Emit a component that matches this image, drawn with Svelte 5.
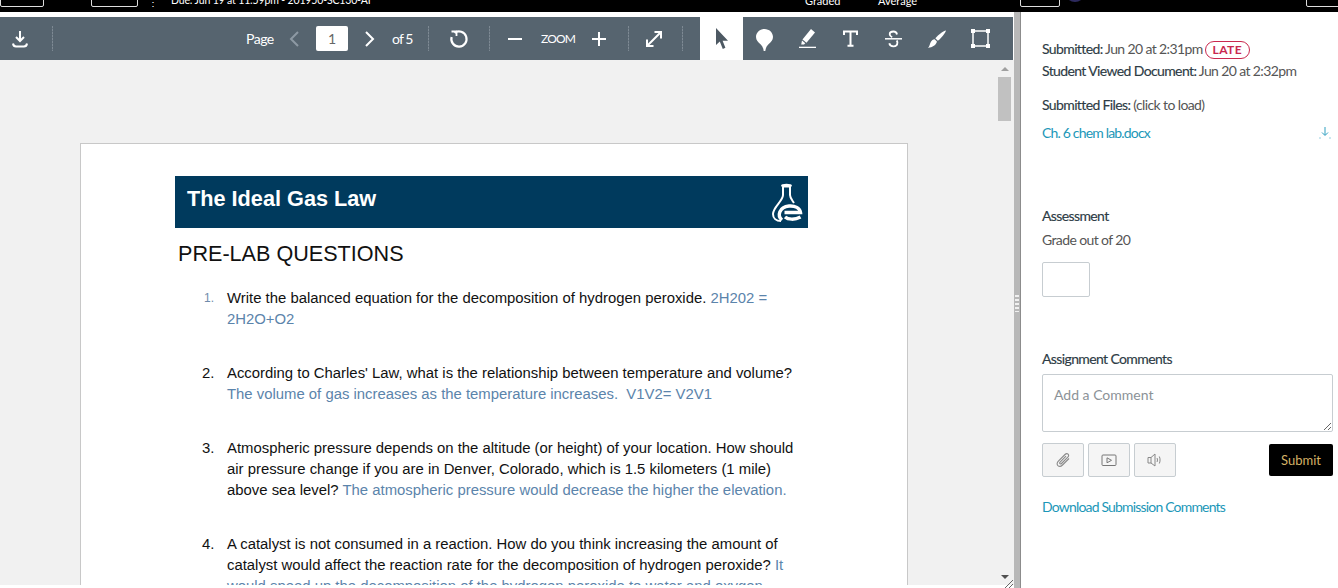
<script>
  const questions = [
    {
      n: '1.',
      text: 'Write the balanced equation for the decomposition of hydrogen peroxide.',
      answer: '2H202 = 2H2O+O2',
      small: true
    },
    {
      n: '2.',
      text: "According to Charles' Law, what is the relationship between temperature and volume?",
      answer: 'The volume of gas increases as the temperature increases.\u00a0 V1V2= V2V1'
    },
    {
      n: '3.',
      text: 'Atmospheric pressure depends on the altitude (or height) of your location. How should air pressure change if you are in Denver, Colorado, which is 1.5 kilometers (1 mile) above sea level?',
      answer: 'The atmospheric pressure would decrease the higher the elevation.'
    },
    {
      n: '4.',
      text: 'A catalyst is not consumed in a reaction. How do you think increasing the amount of catalyst would affect the reaction rate for the decomposition of hydrogen peroxide?',
      answer: 'It would speed up the decomposition of the hydrogen peroxide to water and oxygen.'
    }
  ];
</script>

<div class="app">
  <header class="topbar">
    <span class="top-btn first"></span>
    <span class="top-btn second"></span>
    <span class="top-dots">⋮</span>
    <span class="top-text due">Due: Jun 19 at 11:59pm - 201950-SC130-AI</span>
    <span class="top-text graded">Graded</span>
    <span class="top-text average">Average</span>
    <span class="top-btn third"></span>
    <span class="avatar"></span>
    <span class="top-btn fourth"></span>
  </header>

  <div class="body">
    <main class="viewer">
      <div class="toolbar">
        <button class="tool download" aria-label="Download">
          <svg width="18" height="18" viewBox="0 0 18 18" fill="none" stroke="#fff" stroke-width="2"><path d="M9 1v9.500M5 7l4 4 4-4"/><path d="M2 13.500c.3 2 1.200 3 3 3h8c1.800 0 2.700-1 3-3"/></svg>
        </button>
        <span class="sep sep-a"></span>
        <span class="label page-label">Page</span>
        <button class="tool chev prev" aria-label="Previous page">
          <svg width="12" height="16" viewBox="0 0 12 16" fill="none" stroke="#8d99a3" stroke-width="2"><path d="M10 1 3 8l7 7"/></svg>
        </button>
        <input class="page-input" value="1" aria-label="Page number" />
        <button class="tool chev next" aria-label="Next page">
          <svg width="12" height="16" viewBox="0 0 12 16" fill="none" stroke="#fff" stroke-width="2"><path d="m3 1 7 7-7 7"/></svg>
        </button>
        <span class="label of">of 5</span>
        <span class="sep sep-b"></span>
        <button class="tool rotate" aria-label="Rotate">
          <svg width="20" height="20" viewBox="0 0 20 20" fill="none" stroke="#fff" stroke-width="2.200"><path d="M5.500 3.800A7.600 7.600 0 1 1 2.600 8"/><path d="M2.500 2.500h5v4.500" stroke-width="1.800"/></svg>
        </button>
        <span class="sep sep-c"></span>
        <button class="tool minus" aria-label="Zoom out">
          <svg width="14" height="14" viewBox="0 0 14 14" stroke="#fff" stroke-width="2"><path d="M0 7h14"/></svg>
        </button>
        <span class="label zoom">ZOOM</span>
        <button class="tool plus" aria-label="Zoom in">
          <svg width="14" height="14" viewBox="0 0 14 14" stroke="#fff" stroke-width="2"><path d="M0 7h14M7 0v14"/></svg>
        </button>
        <span class="sep sep-d"></span>
        <button class="tool expand" aria-label="Fullscreen">
          <svg width="18" height="18" viewBox="0 0 18 18" fill="none" stroke="#fff" stroke-width="2"><path d="M3 15 15 3M9.500 2h6.500v6.500M2 9.500V16h6.500"/></svg>
        </button>
        <span class="sep sep-e"></span>
        <button class="tool annot selected" aria-label="Select">
          <svg width="14" height="21" viewBox="0 0 14 21" fill="#4d5963"><path d="M1 0v17l3.800-3.600L7.800 21l2.600-1.200-2.800-7H13z"/></svg>
        </button>
        <button class="tool annot pin" aria-label="Point">
          <svg width="17" height="22" viewBox="0 0 17 22" fill="#fff"><path d="M8.500 0C13.200 0 17 3.600 17 8c0 3.200-2.200 5.200-4.500 7.300C11 16.800 9.800 18.500 9.300 22H7.700C7.200 18.500 6 16.800 4.500 15.300 2.200 13.200 0 11.200 0 8 0 3.600 3.800 0 8.500 0z"/></svg>
        </button>
        <button class="tool annot" aria-label="Highlight">
          <svg width="17" height="19" viewBox="0 0 17 19" fill="#fff"><path d="M12 0l4 3.500-8.500 10.300-4-3.300z"/><path d="M3 11.500l3.300 2.800-1.300 1.200H2.200z"/><path d="M0 17.700h17v1.300H0z"/></svg>
        </button>
        <button class="tool annot" aria-label="Text">
          <svg width="15" height="17" viewBox="0 0 15 17" fill="none" stroke="#fff" stroke-width="2"><path d="M1 5V1.500h13V5M7.500 1.500V15.500M4.500 15.800h6" /></svg>
        </button>
        <button class="tool annot" aria-label="Strikethrough">
          <svg width="17" height="18" viewBox="0 0 17 18" fill="none" stroke="#fff" stroke-width="1.800"><path d="M12 4.500c-.3-2-1.800-3-3.600-3-2.200 0-3.700 1.200-3.700 2.800 0 1.500 1 2.300 2.500 3M11.600 10.500c.5.500.8 1.200.8 2 0 2.200-1.700 3.800-4 3.800-2.200 0-3.700-1.100-4.100-3"/><path d="M0 8.800h17" stroke-width="1.500"/></svg>
        </button>
        <button class="tool annot" aria-label="Draw">
          <svg width="18" height="18" viewBox="0 0 18 18" fill="#fff"><path d="M17.800.5c.6.700-4 7.300-8 10.300L7.300 8.300C10.500 4.300 17.100-.2 17.800.5z"/><path d="M6.600 9.300l2.300 2.300C8.400 15 4.500 17.500 0 18c1.500-1.500 1.800-4 2.800-6 .8-1.500 2.300-2.600 3.800-2.700z"/></svg>
        </button>
        <button class="tool annot area" aria-label="Area">
          <svg width="19" height="19" viewBox="0 0 19 19" fill="#fff"><path d="M2 2h15v15H2z" fill="none" stroke="#fff" stroke-width="1.500"/><path d="M0 0h4v4H0zM15 0h4v4h-4zM0 15h4v4H0zM15 15h4v4h-4z"/></svg>
        </button>
      </div>

      <div class="doc">
        <article class="page">
          <div class="banner">
            <h1>The Ideal Gas Law</h1>
            <svg class="flask" width="32" height="40" viewBox="0 0 32 40" fill="none" stroke="#fff" stroke-width="2">
              <path d="M11 2.500c0-1.300 9-1.300 9 0 0 1.500-9 1.500-9 0z" stroke-width="1.800"/>
              <path d="M12 4v8C12 18 2 24 2 31c0 4 3 7 8 7"/>
              <path d="M19 4v8c0 3 2 5 4 8"/>
              <path d="M11 37C6 33 8 24 18 23c6-.5 11 2 11.500 6.500H13.500" stroke-width="3.400"/>
              <path d="M14 34c3 2.800 10 3 15.500 0" stroke-width="3.400"/>
            </svg>
          </div>
          <h2>PRE-LAB QUESTIONS</h2>
          <ol class="questions">
            {#each questions as q}
              <li>
                <span class="num" class:small={q.small}>{q.n}</span>
                <p>{q.text} <span class="answer">{q.answer}</span></p>
              </li>
            {/each}
          </ol>
        </article>

        <div class="scrollbar">
          <span class="arrow up"></span>
          <span class="thumb"></span>
          <span class="arrow down"></span>
        </div>
      </div>
      <svg class="resize" width="10" height="10" viewBox="0 0 10 10" stroke="#666" fill="none"><path d="M2 10l8-8M6 10l4-4"/></svg>
    </main>

    <div class="splitter"><span class="grip"></span></div>

    <aside class="side">
      <p class="meta first-meta">
        <b>Submitted:</b> Jun 20 at 2:31pm<span class="late">LATE</span>
      </p>
      <p class="meta"><b>Student Viewed Document:</b> Jun 20 at 2:32pm</p>
      <p class="meta files"><b>Submitted Files:</b> (click to load)</p>
      <div class="file">
        <a href="#file">Ch. 6 chem lab.docx</a>
        <svg width="12" height="12" viewBox="0 0 12 12" fill="none" stroke="#2e9fc0" stroke-width="1"><path d="M6 0v8M3 5.500 6 8.500l3-3"/><path d="M.5 11h1M10.500 11h1"/></svg>
      </div>

      <h3 class="assessment">Assessment</h3>
      <p class="meta grade">Grade out of 20</p>
      <input class="grade-input" aria-label="Grade" />

      <h3 class="comments">Assignment Comments</h3>
      <div class="comment-box">
        <textarea placeholder="Add a Comment"></textarea>
      </div>
      <div class="actions">
        <button class="media" aria-label="Attach">
          <svg width="16" height="16" viewBox="0 0 16 16" fill="none" stroke="#8a8a8a" stroke-width="1.100"><path d="M14 6.500 7.500 13c-1.500 1.500-3.400 1.700-4.600.6-1.200-1.200-1-3 .5-4.500L10 2.500c1-1 2.300-1.100 3.100-.3.800.8.700 2-.3 3L6.500 11.500c-.5.500-1.200.6-1.600.2-.4-.4-.3-1 .2-1.600L11 4.200"/></svg>
        </button>
        <button class="media" aria-label="Record video">
          <svg width="16" height="14" viewBox="0 0 16 14" fill="none" stroke="#777" stroke-width="1"><rect x="1" y="2" width="14" height="10.500" rx="1"/><path d="M6 4.800v5l4.500-2.500z"/></svg>
        </button>
        <button class="media" aria-label="Record audio">
          <svg width="16" height="14" viewBox="0 0 16 14" fill="none" stroke="#888" stroke-width="1"><path d="M1 4.500h3V10H1zM4 4.500 8 1v12l-4-3"/><path d="M10 5c.6 1.200.6 2.800 0 4M12.300 3.500c1 2 1 5 0 7"/></svg>
        </button>
        <button class="submit">Submit</button>
      </div>
      <a class="download-comments" href="#comments">Download Submission Comments</a>
    </aside>
  </div>
</div>

<style>
  :global(body) {
    margin: 0;
    background: #fff;
    overflow: hidden;
  }

  .app {
    width: 1338px;
    height: 588px;
    overflow: hidden;
    font-family: Lato, "Liberation Sans", sans-serif;
  }

  .topbar {
    display: flex;
    align-items: flex-end;
    height: 12px;
    padding-bottom: 5px;
    box-sizing: border-box;
    background: #000;
    overflow: hidden;
    color: #fff;
  }

  .top-btn {
    flex: none;
    height: 20px;
    box-sizing: border-box;
    border: 1px solid #ddd;
    border-radius: 2px;
  }

  .top-btn.first { width: 44px; }
  .top-btn.second { width: 47px; margin-left: 47px; }
  .top-btn.third { width: 40px; margin-left: 102px; }
  .top-btn.fourth { width: 40px; margin-left: 221px; }

  .top-dots {
    flex: none;
    width: 8px;
    margin-left: 10px;
    font-size: 10px;
    line-height: 10px;
  }

  .top-text {
    flex: none;
    font-size: 11px;
    line-height: 13px;
    font-weight: 400;
    white-space: nowrap;
  }

  .due { width: 300px; margin-left: 15px; font-size: 10.500px; letter-spacing: -0.15px; }
  .graded { width: 40px; margin-left: 334px; }
  .average { width: 40px; margin-left: 33px; }

  .avatar {
    flex: none;
    width: 20px;
    height: 20px;
    margin-left: 5px;
    margin-bottom: 5px;
    border-radius: 50%;
    background: #2d2a5e;
  }

  .body {
    display: flex;
    height: 576px;
  }

  .viewer {
    position: relative;
    display: flex;
    flex-direction: column;
    flex: none;
    width: 1014px;
    padding: 5px 0 3px;
    box-sizing: border-box;
  }

  .toolbar {
    display: flex;
    align-items: center;
    flex: none;
    width: 1013px;
    height: 43px;
    background: #56646f;
    color: #fff;
  }

  .tool {
    display: flex;
    align-items: center;
    justify-content: center;
    flex: none;
    height: 43px;
    padding: 0;
    border: 0;
    background: none;
  }

  .download { width: 40px; }
  .chev, .minus, .plus { width: 20px; }
  .rotate, .expand { width: 30px; }
  .prev { margin-left: 11px; }
  .next { margin-left: 11px; }
  .rotate { margin-left: 15px; }
  .minus { margin-left: 15px; }
  .plus { margin-left: 15px; }
  .expand { margin-left: 10px; }

  .annot { width: 43px; }
  .area { margin-left: 1px; }
  .pin { padding-top: 2px; box-sizing: border-box; }

  .selected {
    height: 44px;
    margin-top: -1px;
    margin-left: 17px;
    background: #fff;
  }

  .sep {
    flex: none;
    width: 1px;
    height: 25px;
    background: repeating-linear-gradient(#7d8993 0 2px, #66737e 2px 3px);
  }

  .sep-a { margin-left: 12px; }
  .sep-b { margin-left: 16px; }
  .sep-c { margin-left: 15px; }
  .sep-d { margin-left: 19px; }
  .sep-e { margin-left: 13px; }

  .label {
    flex: none;
    font-size: 14px;
    letter-spacing: -0.5px;
    white-space: nowrap;
  }

  .page-label { width: 27px; margin-left: 193px; }
  .of { width: 20px; margin-left: 13px; letter-spacing: -0.9px; }
  .zoom { width: 33px; margin-left: 16px; font-size: 12px; letter-spacing: -0.8px; }

  .page-input {
    flex: none;
    width: 32px;
    height: 25px;
    margin-left: 12px;
    padding: 0;
    box-sizing: border-box;
    border: 0;
    border-radius: 2px;
    background: #fff;
    color: #666;
    font: 14px Lato, sans-serif;
    text-align: center;
  }

  .doc {
    position: relative;
    flex: 1;
    min-height: 0;
    padding: 83px 0 0 80px;
    overflow: hidden;
    background: #f1f1f1;
  }

  .page {
    width: 828px;
    height: 600px;
    padding: 32px 0 0 94px;
    box-sizing: border-box;
    border: 1px solid #c8c8c8;
    background: #fff;
    font-family: "Liberation Sans", Arial, sans-serif;
    color: #111;
  }

  .banner {
    display: flex;
    align-items: center;
    justify-content: space-between;
    width: 633px;
    height: 52px;
    padding: 0 5px 0 12px;
    box-sizing: border-box;
    background: #003a5d;
  }

  .banner h1 {
    margin: 0 0 6px;
    color: #fff;
    font-size: 21.700px;
    font-weight: 700;
  }

  .flask { margin-top: 2px; }

  .page h2 {
    margin: 12px 0 0 3px;
    font-size: 21.600px;
    line-height: 27px;
    font-weight: 400;
  }

  .questions {
    margin: 21px 0 0;
    padding: 0;
    list-style: none;
  }

  .questions li {
    display: flex;
    margin-bottom: 33px;
    font-size: 14.880px;
    line-height: 21px;
  }

  .num {
    flex: none;
    width: 25px;
    margin-left: 27px;
  }

  .num.small {
    width: 23px;
    margin-left: 29px;
    color: #6e8bab;
    font-size: 12px;
  }

  .questions p {
    width: 570px;
    margin: 0;
  }

  .answer { color: #5b84ab; }

  .scrollbar {
    position: absolute;
    top: 0;
    right: 0;
    bottom: 0;
    width: 16px;
    background: #f1f1f1;
  }

  .thumb {
    position: absolute;
    top: 17px;
    left: 0;
    width: 13px;
    height: 44px;
    background: #c1c1c1;
  }

  .arrow {
    position: absolute;
    left: 3px;
    width: 0;
    height: 0;
    border-left: 4px solid transparent;
    border-right: 4px solid transparent;
  }

  .arrow.up { top: 7px; border-bottom: 4px solid #a0a0a0; }
  .arrow.down { bottom: 6px; border-top: 4px solid #505050; }

  .resize {
    position: absolute;
    right: 1px;
    bottom: 0;
  }

  .splitter {
    position: relative;
    flex: none;
    width: 7px;
    box-sizing: border-box;
    border-right: 1px solid #8c8c8c;
    background: #b8b8b8;
  }

  .grip {
    position: absolute;
    top: 283px;
    left: 1px;
    width: 4px;
    height: 17px;
    background: repeating-linear-gradient(#f0f0f0 0 2px, #b8b8b8 2px 4px);
  }

  .side {
    flex: 1;
    padding: 27px 5px 0 21px;
    color: #4a4f54;
    font-size: 14px;
    letter-spacing: -0.62px;
    line-height: 20px;
  }

  .meta {
    margin: 0 0 2px;
    white-space: nowrap;
    color: #555;
  }

  .meta b {
    font-weight: 400;
    color: #2d3b45;
    -webkit-text-stroke: 0.15px #2d3b45;
  }

  .files { margin-top: 14px; }

  .late {
    display: inline-block;
    margin-left: 2px;
    padding: 0 7px;
    border: 1px solid #c9294f;
    border-radius: 10px;
    color: #c9294f;
    font-size: 12px;
    font-weight: 700;
    line-height: 16px;
    letter-spacing: 0.4px;
  }

  .file {
    display: flex;
    align-items: center;
    justify-content: space-between;
    margin-top: 8px;
    padding-right: 2px;
  }

  a {
    color: #1b97b8;
    text-decoration: none;
    letter-spacing: -0.82px;
  }

  h3 {
    margin: 0;
    font-size: 14px;
    font-weight: 400;
    color: #2d3b45;
    -webkit-text-stroke: 0.15px #2d3b45;
    line-height: 20px;
  }

  .assessment { margin-top: 63px; }
  .grade { margin-top: 4px; }

  .grade-input {
    display: block;
    width: 48px;
    height: 35px;
    margin-top: 12px;
    box-sizing: border-box;
    border: 1px solid #c7cdd1;
    border-radius: 2px;
    background: #fff;
  }

  .comments { margin-top: 52px; }

  .comment-box {
    margin-top: 5px;
  }

  textarea {
    display: block;
    width: 291px;
    height: 58px;
    padding: 10px 11px;
    box-sizing: border-box;
    border: 1px solid #c7cdd1;
    border-radius: 2px;
    font: 14px/20px Lato, sans-serif;
    color: #333;
  }

  textarea::placeholder { color: #8b9297; opacity: 1; }

  .actions {
    display: flex;
    align-items: center;
    gap: 4px;
    width: 291px;
    margin-top: 11px;
    letter-spacing: normal;
  }

  .media {
    display: flex;
    align-items: center;
    justify-content: center;
    width: 42px;
    height: 34px;
    padding: 0;
    box-sizing: border-box;
    border: 1px solid #c7cdd1;
    border-radius: 2px;
    background: #f5f5f5;
  }

  .submit {
    width: 64px;
    height: 32px;
    margin-left: auto;
    padding: 0;
    border: 0;
    border-radius: 2px;
    background: #000;
    color: #d4b266;
    font: 13px Lato, sans-serif;
  }

  .download-comments {
    display: block;
    margin-top: 20px;
  }
</style>
